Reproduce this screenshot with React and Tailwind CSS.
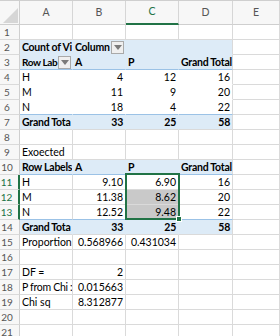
import React from 'react';

const GRID = 'grid grid-cols-[20px_53px_53px_53px_54px_1fr]';

const rows = [
  { n: 1 },
  { n: 2, fill: true, bottom: 'none', flat: true, cells: [{ t: 'Count of Vi', b: true }, { t: 'Column', b: true, drop: true }] },
  { n: 3, fill: true, bottom: 'blue', flat: true, cells: [{ t: 'Row Lab', b: true, drop: true, small: true }, { t: 'A', b: true }, { t: 'P', b: true }, { t: 'Grand Total', b: true }] },
  { n: 4, bottom: 'none', flat: true, cells: [{ t: 'H' }, { t: '4', r: true }, { t: '12', r: true }, { t: '16', r: true }] },
  { n: 5, bottom: 'none', flat: true, cells: [{ t: 'M' }, { t: '11', r: true }, { t: '9', r: true }, { t: '20', r: true }] },
  { n: 6, bottom: 'blue', flat: true, cells: [{ t: 'N' }, { t: '18', r: true }, { t: '4', r: true }, { t: '22', r: true }] },
  { n: 7, fill: true, flat: true, cells: [{ t: 'Grand Tota', b: true }, { t: '33', r: true, b: true }, { t: '25', r: true, b: true }, { t: '58', r: true, b: true }] },
  { n: 8 },
  { n: 9, cells: [{ t: 'Exoected' }] },
  { n: 10, fill: true, bottom: 'blue', flat: true, cells: [{ t: 'Row Labels', b: true }, { t: 'A', b: true }, { t: 'P', b: true }, { t: 'Grand Total', b: true }] },
  { n: 11, sel: true, cells: [{ t: 'H' }, { t: '9.10', r: true }, { t: '6.90', r: true }, { t: '16', r: true }] },
  { n: 12, sel: true, cells: [{ t: 'M' }, { t: '11.38', r: true }, { t: '8.62', r: true, grey: true }, { t: '20', r: true }] },
  { n: 13, sel: true, bottom: 'blue', cells: [{ t: 'N' }, { t: '12.52', r: true }, { t: '9.48', r: true, grey: true }, { t: '22', r: true }] },
  { n: 14, fill: true, flat: true, cells: [{ t: 'Grand Tota', b: true }, { t: '33', r: true, b: true }, { t: '25', r: true, b: true }, { t: '58', r: true, b: true }] },
  { n: 15, cells: [{ t: 'Proportion' }, { t: '0.568966', r: true }, { t: '0.431034', r: true }] },
  { n: 16 },
  { n: 17, cells: [{ t: 'DF =' }, { t: '2', r: true }] },
  { n: 18, cells: [{ t: 'P from Chi :', tight: true }, { t: '0.015663', r: true }] },
  { n: 19, cells: [{ t: 'Chi sq' }, { t: '8.312877', r: true }] },
  { n: 20 },
  { n: 21 },
];

const DropButton = () => (
  <span className="shrink-0 w-[13px] h-[13px] border border-[#a9a9a9] bg-[#efefef] flex items-center justify-center">
    <svg width="8" height="5" viewBox="0 0 8 5">
      <path d="M0 0 L8 0 L4 5 Z" fill="#7a7a7a" />
    </svg>
  </span>
);

const Cell = ({ cell, row, col }) => {
  const inTable = col < 4;
  const bottom = inTable ? row.bottom || 'grid' : 'grid';
  const bColor = bottom === 'blue' ? 'border-b-[#9bc2e6]' : bottom === 'none' ? 'border-b-transparent' : 'border-b-[#dadada]';
  const rColor = inTable && row.flat && col < 3 ? 'border-r-transparent' : 'border-r-[#dadada]';
  const bg = cell?.grey ? 'bg-[#c9c9c9]' : inTable && row.fill ? 'bg-[#ddebf7]' : '';
  const clip = col === 3 ? 'overflow-visible' : 'overflow-hidden';
  const pad = cell?.drop ? 'pl-[2px] pr-[1px]' : 'px-[2px]';
  const track = cell?.small ? 'tracking-[-0.4px] text-[10px]' : cell?.b ? 'tracking-[-0.25px]' : cell?.tight ? 'tracking-[-0.3px]' : '';
  return (
    <div className={`h-[15px] border-r border-b ${bColor} ${rColor} ${bg} ${clip} ${pad} flex items-center whitespace-nowrap ${cell?.r ? 'justify-end' : 'justify-start'}`}>
      {cell && (
        <>
          <span className={`leading-[14px] text-black ${cell.b ? 'font-bold' : ''} ${track} ${cell.drop ? 'flex-1 min-w-0 overflow-hidden' : ''}`}>{cell.t}</span>
          {cell.drop && <DropButton />}
        </>
      )}
    </div>
  );
};

export default function App() {
  return (
    <div className="w-[280px] h-[336px] overflow-hidden bg-white font-['Lato','Liberation_Sans',sans-serif] text-[10.5px]">
      <div className="relative">
        <div className={`${GRID} h-[25px] border-t border-[#cfcfcf] bg-[#f7f7f7] text-[#555]`}>
          <div className="relative border-r border-b border-[#cfcfcf]">
            <svg className="absolute right-[1px] bottom-[1px]" width="15" height="15" viewBox="0 0 15 15">
              <path d="M15 0 L15 15 L0 15 Z" fill="#d6d6d6" />
            </svg>
          </div>
          {['A', 'B', 'C', 'D', 'E'].map((c) => (
            <div
              key={c}
              className={`flex items-center justify-center border-r border-[#d6d6d6] ${c === 'C' ? 'border-b-2 border-b-[#217346] text-[#217346]' : 'border-b border-b-[#cfcfcf]'}`}
            >
              {c}
            </div>
          ))}
        </div>

        {rows.map((row) => (
          <div key={row.n} className={GRID}>
            <div
              className={`h-[15px] flex items-center justify-center pr-[5px] border-b border-[#dadada] bg-[#f7f7f7] text-[10px] leading-[14px] ${
                row.sel ? 'border-r-2 border-r-[#217346] text-[#217346]' : 'border-r border-r-[#cfcfcf] text-[#555]'
              }`}
            >
              {row.n}
            </div>
            {[0, 1, 2, 3, 4].map((col) => (
              <Cell key={col} cell={row.cells?.[col]} row={row} col={col} />
            ))}
          </div>
        ))}

        <div className="absolute left-[125px] top-[173px] w-[55px] h-[47px] border-2 border-[#217346] pointer-events-none">
          <div className="absolute -right-[4px] -bottom-[4px] w-[6px] h-[6px] bg-[#217346] border border-white" />
        </div>
      </div>
    </div>
  );
}
